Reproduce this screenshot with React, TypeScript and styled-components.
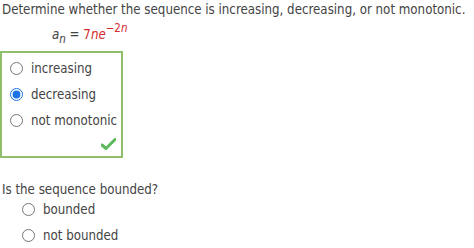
import React from 'react';
import styled, { createGlobalStyle } from 'styled-components';

const GlobalStyle = createGlobalStyle`
    body {
        margin: 0;
        background: #ffffff;
        font-family: "DejaVu Sans Condensed", "DejaVu Sans", Verdana, sans-serif;
        font-stretch: condensed;
        font-size: 13.2px;
        color: #444444;
    }
`;

const Page = styled.div`
    padding: 2px 0 0 2px;
`;

const Question = styled.div`
    line-height: 16px;
    white-space: nowrap;
`;

const Formula = styled.div`
    padding: 7px 0 0 50px;
    height: 26px;
    line-height: 20px;
    font-style: italic;
`;

const Red = styled.span`
    color: #d42a2a;
`;

const Upright = styled.span`
    font-style: normal;
`;

const Sup = styled.sup`
    font-size: 11.5px;
    font-style: normal;
    vertical-align: 7px;
    line-height: 0;
`;

const Sub = styled.sub`
    font-size: 11.5px;
    vertical-align: -4px;
    line-height: 0;
`;

const AnswerBox = styled.div`
    margin: 0 0 0 -2px;
    width: 119px;
    height: 101px;
    border: 2px solid #8fbf6a;
    padding-top: 2px;
    position: relative;
`;

const Option = styled.label<{ $indent?: number }>`
    display: flex;
    align-items: center;
    height: 26px;
    padding-left: ${(p) => p.$indent ?? 8}px;
    gap: 8px;
    white-space: nowrap;
`;

const Radio = styled.input`
    margin: 0;
    width: 13px;
    height: 13px;
    accent-color: #1a73e8;
`;

const Check = styled.svg`
    position: absolute;
    right: 5px;
    bottom: 6px;
`;

const Question2 = styled.div`
    margin-top: 24px;
    margin-bottom: -2px;
    line-height: 16px;
`;

const App = () => (
    <>
        <GlobalStyle />
        <Page>
            <Question>Determine whether the sequence is increasing, decreasing, or not monotonic.</Question>
            <Formula>
                a<Sub>n</Sub>
                <Upright> = </Upright>
                <Red>
                    <Upright>7</Upright>ne
                    <Sup>
                        −2<i>n</i>
                    </Sup>
                </Red>
            </Formula>
            <AnswerBox>
                <Option>
                    <Radio type="radio" name="mono" />
                    increasing
                </Option>
                <Option>
                    <Radio type="radio" name="mono" defaultChecked />
                    decreasing
                </Option>
                <Option>
                    <Radio type="radio" name="mono" />
                    not monotonic
                </Option>
                <Check width="15" height="12" viewBox="0 0 15 12">
                    <path d="M1 7 L5 10.5 L14 1.5" fill="none" stroke="#5cb85c" strokeWidth="3" strokeLinecap="round" strokeLinejoin="round" />
                </Check>
            </AnswerBox>
            <Question2>Is the sequence bounded?</Question2>
            <Option $indent={20}>
                <Radio type="radio" name="bound" />
                bounded
            </Option>
            <Option $indent={20}>
                <Radio type="radio" name="bound" />
                not bounded
            </Option>
        </Page>
    </>
);

export default App;
